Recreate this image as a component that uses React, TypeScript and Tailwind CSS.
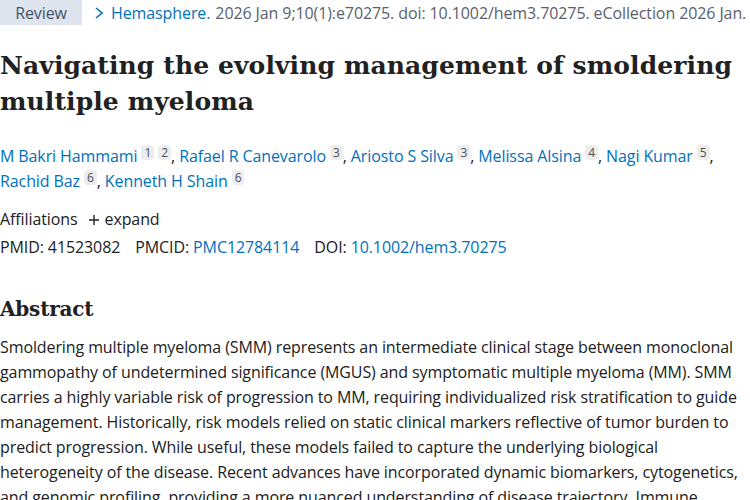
import React from 'react';

const authors = [
  { name: 'M Bakri Hammami', refs: ['1', '2'] },
  { name: 'Rafael R Canevarolo', refs: ['3'] },
  { name: 'Ariosto S Silva', refs: ['3'] },
  { name: 'Melissa Alsina', refs: ['4'] },
  { name: 'Nagi Kumar', refs: ['5'] },
  { name: 'Rachid Baz', refs: ['6'] },
  { name: 'Kenneth H Shain', refs: ['6'] },
];

const abstractText =
  'Smoldering multiple myeloma (SMM) represents an intermediate clinical stage between monoclonal gammopathy of undetermined significance (MGUS) and symptomatic multiple myeloma (MM). SMM carries a highly variable risk of progression to MM, requiring individualized risk stratification to guide management. Historically, risk models relied on static clinical markers reflective of tumor burden to predict progression. While useful, these models failed to capture the underlying biological heterogeneity of the disease. Recent advances have incorporated dynamic biomarkers, cytogenetics, and genomic profiling, providing a more nuanced understanding of disease trajectory. Immune profiling of the bone marrow microenvironment has further refined risk prediction.';

const serif = { fontFamily: '"DejaVu Serif", "Liberation Serif", serif' };

export default function App() {
  return (
    <div
      className="w-[750px] h-[500px] overflow-hidden bg-white text-[#212121] text-[16px] tracking-[-0.1px]"
      style={{ fontFamily: '"Open Sans", "Noto Sans", sans-serif' }}
    >
      <div className="flex items-center h-[25px] whitespace-nowrap">
        <span className="bg-[#dfe5ee] text-[#44546a] w-[82px] h-[25px] flex items-center justify-center">Review</span>
        <span className="ml-[11px] text-[#0071bc] flex items-center">
          <svg width="12" height="14" viewBox="0 0 12 14" className="mr-[6px]">
            <path d="M3 2 L9 7 L3 12" fill="none" stroke="#0071bc" strokeWidth="1.6" />
          </svg>
          Hemasphere.
        </span>
        <span className="ml-[5px] text-[#5b616b]">2026 Jan 9;10(1):e70275. doi: 10.1002/hem3.70275. eCollection 2026 Jan.</span>
      </div>

      <h1 className="mt-[23px] text-[25px] leading-[36px] font-bold text-[#212121] tracking-[0.1px]" style={serif}>
        Navigating the evolving management of smoldering multiple myeloma
      </h1>

      <div className="mt-[24px] leading-[25px] pr-[8px]">
        {authors.map((a, i) => (
          <span key={a.name}>
            <span className="text-[#0071bc]">{a.name}</span>
            {a.refs.map((r) => (
              <span
                key={r}
                className="relative -top-[5px] ml-[4px] inline-block bg-[#ededed] text-[#4a4f55] text-[12px] leading-[15px] px-[3px] rounded-sm align-baseline"
              >
                {r}
              </span>
            ))}
            {i < authors.length - 1 && <span className="text-[#212121]">, </span>}
          </span>
        ))}
      </div>

      <div className="mt-[13px] flex items-center leading-[25px]">
        <span>Affiliations</span>
        <span className="ml-[10px] flex items-center">
          <svg width="12" height="12" viewBox="0 0 12 12" className="mr-[5px]">
            <path d="M6 1 V11 M1 6 H11" stroke="#212121" strokeWidth="1.4" />
          </svg>
          expand
        </span>
      </div>

      <div className="mt-[3px] flex items-center leading-[25px] whitespace-nowrap">
        <span>PMID: 41523082</span>
        <span className="ml-[15px]">PMCID: <span className="text-[#0071bc]">PMC12784114</span></span>
        <span className="ml-[15px]">DOI: <span className="text-[#0071bc]">10.1002/hem3.70275</span></span>
      </div>

      <h2 className="mt-[34px] text-[20px] leading-[30px] font-bold text-[#212121] tracking-[-0.2px]" style={serif}>
        Abstract
      </h2>

      <p className="mt-[11px] leading-[25px] text-[#212121]">{abstractText}</p>
    </div>
  );
}
